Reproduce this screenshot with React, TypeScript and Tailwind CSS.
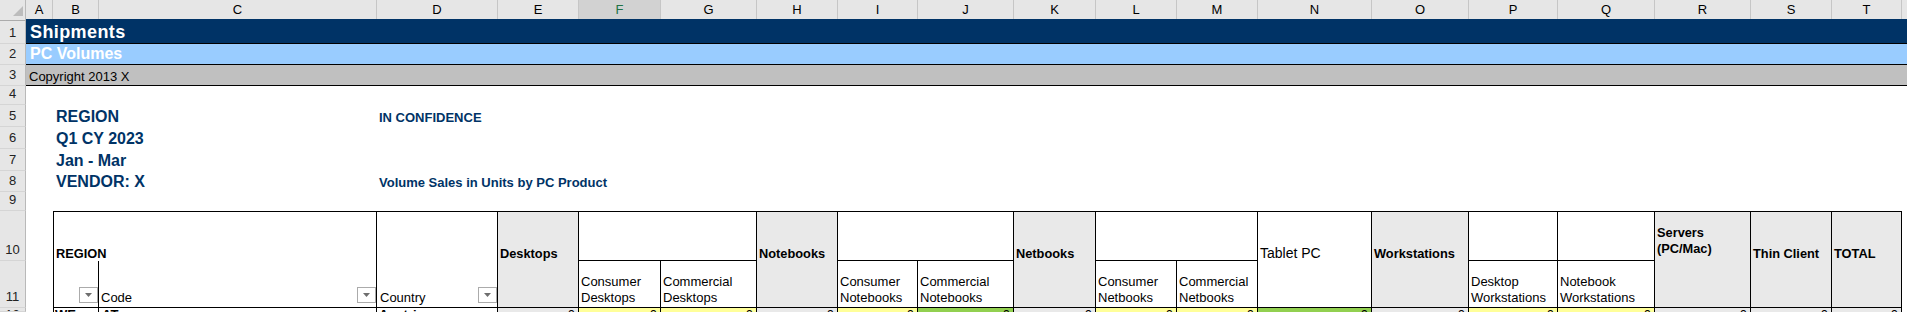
import React from "react";

// column widths: row header, A..T, then the sliver of U
const COLS =
  "grid grid-cols-[26px_27px_46px_278px_121px_81px_82px_96px_81px_80px_96px_82px_81px_81px_114px_97px_89px_97px_96px_81px_70px_1fr]";

const LETTERS = "ABCDEFGHIJKLMNOPQRST".split("");

const GRAY = "bg-[#e9e9e9]";
const YELLOW = "bg-[#ffff99]";
const GREEN = "bg-[#92d050]";

function RowNum({ n, top = false, className = "" }: { n: number; top?: boolean; className?: string }) {
  const align = top ? "items-start leading-[13px] overflow-hidden" : "items-end pb-[2px] leading-[16px]";
  return (
    <div
      className={`flex justify-center ${align} bg-[#e6e6e6] border-r border-r-[#b9b9b9] border-b border-b-[#d5d5d5] text-[13px] text-[#222] ${className}`}
    >
      {n}
    </div>
  );
}

function ColumnHeader() {
  return (
    <div className={`${COLS} h-[19px] text-[13px] leading-[18px]`}>
      <div className="relative bg-[#e6e6e6] border-r border-r-[#b9b9b9] border-b border-b-[#ababab]">
        <svg className="absolute left-0 top-0" width="26" height="19" viewBox="0 0 26 19">
          <polygon points="13,16 23,16 23,6" fill="#bcbcbc" />
        </svg>
      </div>
      {LETTERS.map((l) =>
        l === "F" ? (
          <div
            key={l}
            className="flex justify-center pt-[1px] bg-[#d2d2d2] border-r border-r-[#c6c6c6] border-b-2 border-b-[#217346] text-[#217346]"
          >
            {l}
          </div>
        ) : (
          <div
            key={l}
            className="flex justify-center pt-[1px] bg-[#e6e6e6] border-r border-r-[#c6c6c6] border-b border-b-[#ababab] text-black"
          >
            {l}
          </div>
        )
      )}
      <div className="bg-[#e6e6e6] border-b border-b-[#ababab]" />
    </div>
  );
}

function FilterButton() {
  return (
    <span className="absolute right-0 bottom-[4px] flex h-[16px] w-[19px] items-center justify-center border border-[#ababab] bg-white">
      <svg width="7" height="4" viewBox="0 0 7 4">
        <path d="M0 0h7L3.5 4z" fill="#6e6e6e" />
      </svg>
    </span>
  );
}

const HEAD = "flex items-end pl-[2px] border-t border-r border-black text-[12.8px] font-bold leading-[15px] whitespace-nowrap";
const SUBHEAD = "flex items-end pl-[2px] pb-[1px] border-r border-b border-black text-[13px] leading-[16px]";

const row11 = [
  { col: "col-[6/7]", bg: GRAY, text: null },
  { col: "col-[7/8]", bg: "", text: ["Consumer", "Desktops"] },
  { col: "col-[8/9]", bg: "", text: ["Commercial", "Desktops"] },
  { col: "col-[9/10]", bg: GRAY, text: null },
  { col: "col-[10/11]", bg: "", text: ["Consumer", "Notebooks"] },
  { col: "col-[11/12]", bg: "", text: ["Commercial", "Notebooks"] },
  { col: "col-[12/13]", bg: GRAY, text: null },
  { col: "col-[13/14]", bg: "", text: ["Consumer", "Netbooks"] },
  { col: "col-[14/15]", bg: "", text: ["Commercial", "Netbooks"] },
  { col: "col-[15/16]", bg: "", text: null },
  { col: "col-[16/17]", bg: GRAY, text: null },
  { col: "col-[17/18]", bg: "", text: ["Desktop", "Workstations"] },
  { col: "col-[18/19]", bg: "", text: ["Notebook", "Workstations"] },
  { col: "col-[19/20]", bg: GRAY, text: null },
  { col: "col-[20/21]", bg: GRAY, text: null },
  { col: "col-[21/22]", bg: GRAY, text: null },
];

const row12 = [
  ["col-[6/7]", GRAY],
  ["col-[7/8]", YELLOW],
  ["col-[8/9]", YELLOW],
  ["col-[9/10]", GRAY],
  ["col-[10/11]", YELLOW],
  ["col-[11/12]", GREEN],
  ["col-[12/13]", GRAY],
  ["col-[13/14]", YELLOW],
  ["col-[14/15]", YELLOW],
  ["col-[15/16]", GREEN],
  ["col-[16/17]", GRAY],
  ["col-[17/18]", YELLOW],
  ["col-[18/19]", YELLOW],
  ["col-[19/20]", GRAY],
  ["col-[20/21]", GRAY],
  ["col-[21/22]", GRAY],
];

function HeaderTable() {
  return (
    <div className={`${COLS} grid-rows-[50px_47px_4px] text-black`}>
      {/* row 10 */}
      <RowNum n={10} className="col-[1/2] row-[1/2]" />
      <div className={`col-[3/5] row-[1/2] border-l ${HEAD} pl-[1px]`}>REGION</div>
      <div className="col-[5/6] row-[1/2] border-t border-r border-black" />
      <div className={`col-[6/7] row-[1/2] ${GRAY} ${HEAD}`}>Desktops</div>
      <div className="col-[7/9] row-[1/2] border-t border-r border-b border-black" />
      <div className={`col-[9/10] row-[1/2] ${GRAY} ${HEAD}`}>Notebooks</div>
      <div className="col-[10/12] row-[1/2] border-t border-r border-b border-black" />
      <div className={`col-[12/13] row-[1/2] ${GRAY} ${HEAD}`}>Netbooks</div>
      <div className="col-[13/15] row-[1/2] border-t border-r border-b border-black" />
      <div className="col-[15/16] row-[1/2] flex items-end pl-[2px] border-t border-r border-black text-[14px] leading-[15px] whitespace-nowrap">
        Tablet PC
      </div>
      <div className={`col-[16/17] row-[1/2] ${GRAY} ${HEAD}`}>Workstations</div>
      <div className="col-[17/18] row-[1/2] border-t border-r border-b border-black" />
      <div className="col-[18/19] row-[1/2] border-t border-r border-b border-black" />
      <div className={`col-[19/20] row-[1/2] ${GRAY} ${HEAD} pb-[4px] leading-[16px]`}>
        <span>
          Servers
          <br />
          (PC/Mac)
        </span>
      </div>
      <div className={`col-[20/21] row-[1/2] ${GRAY} ${HEAD}`}>Thin Client</div>
      <div className={`col-[21/22] row-[1/2] ${GRAY} ${HEAD}`}>TOTAL</div>

      {/* row 11 */}
      <RowNum n={11} className="col-[1/2] row-[2/3]" />
      <div className={`relative col-[3/4] row-[2/3] border-l ${SUBHEAD}`}>
        <FilterButton />
      </div>
      <div className={`relative col-[4/5] row-[2/3] ${SUBHEAD}`}>
        Code
        <FilterButton />
      </div>
      <div className={`relative col-[5/6] row-[2/3] ${SUBHEAD} pl-[3px]`}>
        Country
        <FilterButton />
      </div>
      {row11.map((c) => (
        <div key={c.col} className={`${c.col} row-[2/3] ${c.bg} ${SUBHEAD}`}>
          {c.text && (
            <span>
              {c.text[0]}
              <br />
              {c.text[1]}
            </span>
          )}
        </div>
      ))}

      {/* row 12, cut off by the window */}
      <RowNum n={12} top className="col-[1/2] row-[3/4]" />
      <div className="col-[3/4] row-[3/4] overflow-hidden pl-[1px] border-l border-r border-black text-[13px] font-bold leading-[13px]">
        WE
      </div>
      <div className="col-[4/5] row-[3/4] overflow-hidden pl-[3px] border-r border-black text-[13px] font-bold leading-[13px]">
        AT
      </div>
      <div className="col-[5/6] row-[3/4] overflow-hidden pl-[2px] border-r border-black text-[13px] font-bold leading-[13px]">
        Austria
      </div>
      {row12.map(([col, bg]) => (
        <div
          key={col}
          className={`${col} row-[3/4] ${bg} overflow-hidden flex justify-end pr-[3px] border-r border-black text-[13px] leading-[13px]`}
        >
          0
        </div>
      ))}
    </div>
  );
}

export default function App() {
  return (
    <div className="h-[312px] w-full overflow-hidden bg-white font-['Liberation_Sans',Arial,sans-serif]">
      <ColumnHeader />

      {/* title bands */}
      <div className={`${COLS} h-[25px]`}>
        <RowNum n={1} />
        <div className="col-[2/-1] flex items-end pl-[4px] bg-[#003366] border-b border-black text-[18px] font-bold leading-[22px] tracking-[0.4px] text-white">
          Shipments
        </div>
      </div>
      <div className={`${COLS} h-[21px]`}>
        <RowNum n={2} />
        <div className="col-[2/-1] flex items-end pl-[4px] pb-[1px] bg-[#99ccff] border-b border-black text-[16px] font-bold leading-[18px] text-white">
          PC Volumes
        </div>
      </div>
      <div className={`${COLS} h-[21px]`}>
        <RowNum n={3} />
        <div className="col-[2/-1] flex items-end pl-[3px] bg-[#c0c0c0] border-b border-black text-[13px] leading-[16px] text-black">
          Copyright 2013 X
        </div>
      </div>

      <div className={`${COLS} h-[19px]`}>
        <RowNum n={4} />
      </div>

      {/* report info */}
      {[
        { n: 5, h: "h-[22px]", left: "REGION", right: "IN CONFIDENCE" },
        { n: 6, h: "h-[22px]", left: "Q1 CY 2023", right: "" },
        { n: 7, h: "h-[22px]", left: "Jan - Mar", right: "" },
        { n: 8, h: "h-[21px]", left: "VENDOR: X", right: "Volume Sales in Units by PC Product" },
      ].map((r) => (
        <div key={r.n} className={`${COLS} ${r.h} text-[#003366]`}>
          <RowNum n={r.n} />
          <div className="col-[3/5] flex items-end pb-[1px] pl-[3px] text-[16px] font-bold leading-[18px] whitespace-nowrap">
            {r.left}
          </div>
          <div className="col-[5/-1] flex items-end pb-[1px] pl-[2px] text-[13px] font-bold leading-[16px] whitespace-nowrap">
            {r.right}
          </div>
        </div>
      ))}

      <div className={`${COLS} h-[19px]`}>
        <RowNum n={9} />
      </div>

      <HeaderTable />
    </div>
  );
}
